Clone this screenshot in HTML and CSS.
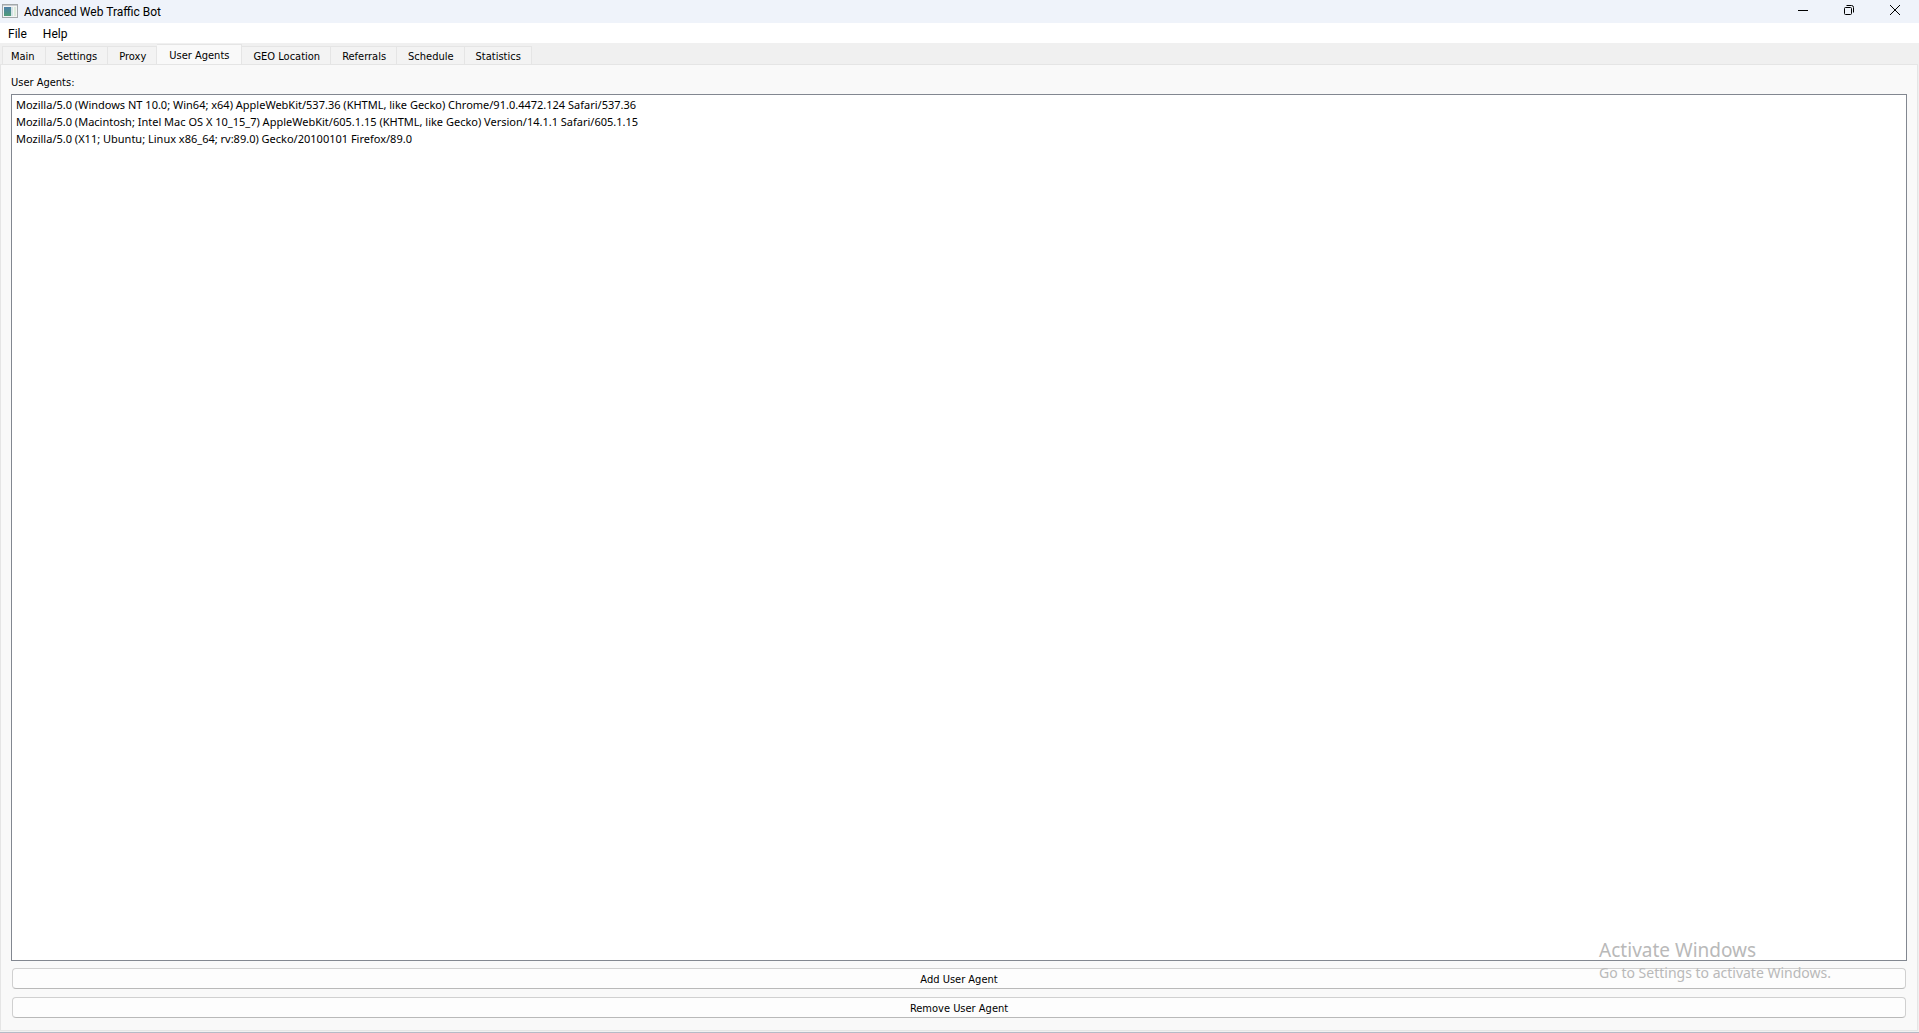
FILE: index.html
```html
<!DOCTYPE html>
<html lang="en">
<head>
    <meta charset="UTF-8">
    <meta name="viewport" content="width=device-width, initial-scale=1.0">
    <title>Advanced Web Traffic Bot</title>
    <link rel="stylesheet" href="styles.css">
</head>
<body>
    <div class="window">
        <header class="titlebar">
            <svg class="app-icon" width="16" height="14" viewBox="0 0 16 14">
                <defs>
                    <linearGradient id="screen" x1="0" y1="0" x2="0" y2="1">
                        <stop offset="0" stop-color="#4c7fa8"/>
                        <stop offset="1" stop-color="#4f9c78"/>
                    </linearGradient>
                </defs>
                <rect x="0.5" y="0.5" width="15" height="13" fill="#f4f4f4" stroke="#a3a8ab"/>
                <rect x="1" y="1" width="14" height="1" fill="#c9cdd0"/>
                <rect x="2" y="3" width="7" height="9" fill="url(#screen)"/>
                <rect x="9" y="3" width="2" height="9" fill="#d3e3e6"/>
                <rect x="12" y="3" width="2" height="9" fill="#dcebdc"/>
            </svg>
            <h1 class="title">Advanced Web Traffic Bot</h1>
            <div class="window-buttons">
                <button class="window-button" aria-label="Minimize">
                    <svg width="10" height="10" viewBox="0 0 10 10"><path d="M0 5.5h10"/></svg>
                </button>
                <button class="window-button" aria-label="Restore">
                    <svg width="10" height="10" viewBox="0 0 10 10"><rect x="0.5" y="2.5" width="7" height="7" rx="1"/><path d="M2.5 0.5h5a2 2 0 0 1 2 2v5"/></svg>
                </button>
                <button class="window-button" aria-label="Close">
                    <svg width="10" height="10" viewBox="0 0 10 10"><path d="M0 0l10 10M10 0L0 10"/></svg>
                </button>
            </div>
        </header>

        <nav class="menubar">
            <button class="menu">File</button>
            <button class="menu">Help</button>
        </nav>

        <div class="tabs" role="tablist">
            <button class="tab" role="tab">Main</button>
            <button class="tab" role="tab">Settings</button>
            <button class="tab" role="tab">Proxy</button>
            <button class="tab active" role="tab" aria-selected="true">User Agents</button>
            <button class="tab" role="tab">GEO Location</button>
            <button class="tab" role="tab">Referrals</button>
            <button class="tab" role="tab">Schedule</button>
            <button class="tab" role="tab">Statistics</button>
        </div>

        <main class="panel">
            <label for="agents">User Agents:</label>
            <select id="agents" class="agents" size="3">
                <option>Mozilla/5.0 (Windows NT 10.0; Win64; x64) AppleWebKit/537.36 (KHTML, like Gecko) Chrome/91.0.4472.124 Safari/537.36</option>
                <option>Mozilla/5.0 (Macintosh; Intel Mac OS X 10_15_7) AppleWebKit/605.1.15 (KHTML, like Gecko) Version/14.1.1 Safari/605.1.15</option>
                <option>Mozilla/5.0 (X11; Ubuntu; Linux x86_64; rv:89.0) Gecko/20100101 Firefox/89.0</option>
            </select>
            <button class="action">Add User Agent</button>
            <button class="action">Remove User Agent</button>
        </main>

        <div class="watermark">
            <p class="watermark-title">Activate Windows</p>
            <p class="watermark-text">Go to Settings to activate Windows.</p>
        </div>
    </div>
</body>
</html>
```
FILE: styles.css
```css
* {
    box-sizing: border-box;
}

body {
    margin: 0;
    font-family: "Noto Sans", "Open Sans", sans-serif;
    font-size: 11px;
    color: #000;
}

button {
    margin: 0;
    border: none;
    background: none;
    font: inherit;
    color: inherit;
}

.window {
    position: relative;
    display: flex;
    flex-direction: column;
    height: 100vh;
    padding-bottom: 1px;
    background-color: #f0f0f0;
    border-bottom: 1px solid #b4bac6;
}

.titlebar {
    display: flex;
    align-items: center;
    height: 23px;
    padding: 0 1px 1px 2px;
    background-color: #eff3fa;
}

.title {
    flex: 1;
    margin: 0 0 0 6px;
    padding-top: 2px;
    font-family: Roboto, "Noto Sans", sans-serif;
    font-size: 12px;
    font-weight: normal;
}

.window-buttons {
    display: flex;
}

.window-button {
    display: flex;
    justify-content: center;
    align-items: center;
    width: 46px;
    height: 20px;
    padding: 0 0 2px;
}

.window-button svg {
    fill: none;
    stroke: #000;
}

.menubar {
    display: flex;
    height: 20px;
    background-color: #fff;
}

.menu {
    padding: 0 8px;
    font-family: Roboto, "Noto Sans", sans-serif;
    font-size: 12px;
    line-height: 22px;
}

.tabs {
    display: flex;
    align-items: flex-end;
    height: 21px;
    padding-left: 2px;
    font-family: "DejaVu Sans Condensed", "Noto Sans", sans-serif;
}

.tab {
    height: 18px;
    padding: 2px 10px 0 11px;
    background-color: #f3f3f3;
    border: 1px solid #e5e5e5;
    border-width: 1px 1px 0 0;
    line-height: 15px;
}

.tab:first-child {
    border-left-width: 1px;
    padding-left: 8px;
}

.tab.active {
    height: 21px;
    margin-bottom: -1px;
    padding: 0 12px;
    background-color: #f9f9f9;
}

.panel {
    flex: 1;
    display: flex;
    flex-direction: column;
    margin-right: 1px;
    padding: 10px 10px 12px;
    background-color: #f9f9f9;
    border: 1px solid #e5e5e5;
    font-family: "DejaVu Sans Condensed", "Noto Sans", sans-serif;
}

.panel label {
    line-height: 16px;
    margin-bottom: 3px;
}

.agents {
    flex: 1;
    padding: 2px 0;
    background-color: #fff;
    border: 1px solid #828790;
    border-radius: 0;
    outline: none;
    font-family: "Noto Sans", "Open Sans", sans-serif;
    font-size: 11px;
    color: #000;
}

.agents option {
    min-height: 17px;
    padding: 0 4px;
    line-height: 17px;
}

.action {
    height: 21px;
    margin: 7px 1px 0;
    background-color: #fdfdfd;
    border: 1px solid #d0d0d0;
    border-bottom-color: #b9b9b9;
    border-radius: 4px;
    line-height: 19px;
}

.action + .action {
    margin-top: 8px;
}

/* system overlay, lies above the list and the buttons */
.watermark {
    position: absolute;
    right: 88px;
    bottom: 49px;
    color: #b9b9b9;
    pointer-events: none;
}

.watermark p {
    margin: 0;
}

.watermark-title {
    font-size: 19px;
    line-height: 26px;
}

.watermark-text {
    font-size: 14px;
    line-height: 20px;
}
```
